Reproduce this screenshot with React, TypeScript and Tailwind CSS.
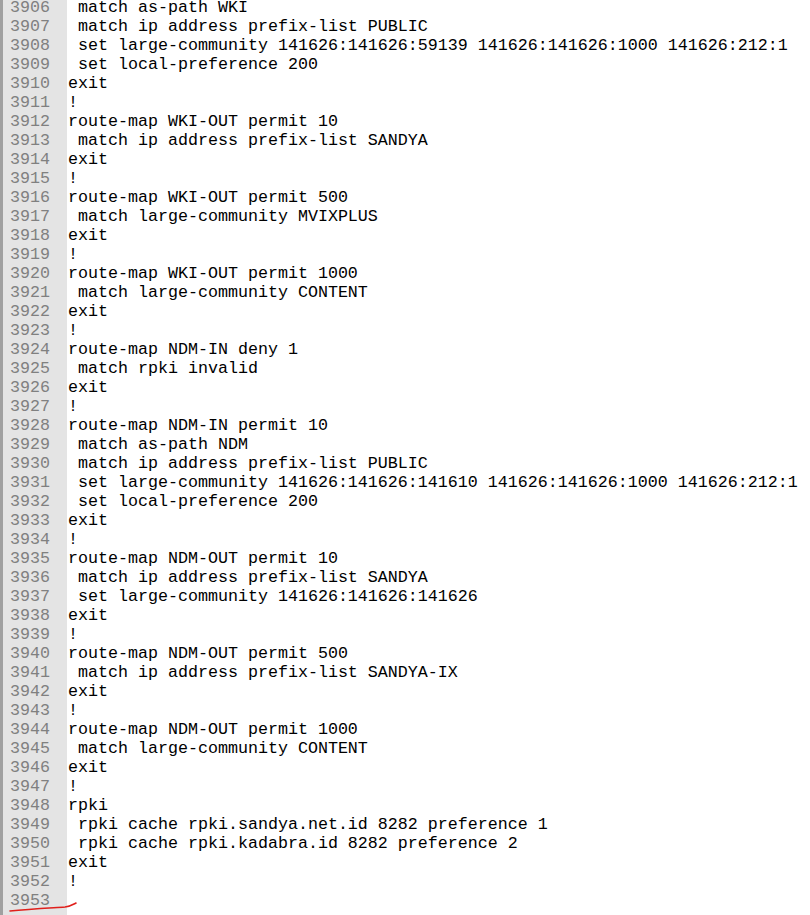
const lines = [
  ' match as-path WKI',
  ' match ip address prefix-list PUBLIC',
  ' set large-community 141626:141626:59139 141626:141626:1000 141626:212:1',
  ' set local-preference 200',
  'exit',
  '!',
  'route-map WKI-OUT permit 10',
  ' match ip address prefix-list SANDYA',
  'exit',
  '!',
  'route-map WKI-OUT permit 500',
  ' match large-community MVIXPLUS',
  'exit',
  '!',
  'route-map WKI-OUT permit 1000',
  ' match large-community CONTENT',
  'exit',
  '!',
  'route-map NDM-IN deny 1',
  ' match rpki invalid',
  'exit',
  '!',
  'route-map NDM-IN permit 10',
  ' match as-path NDM',
  ' match ip address prefix-list PUBLIC',
  ' set large-community 141626:141626:141610 141626:141626:1000 141626:212:1',
  ' set local-preference 200',
  'exit',
  '!',
  'route-map NDM-OUT permit 10',
  ' match ip address prefix-list SANDYA',
  ' set large-community 141626:141626:141626',
  'exit',
  '!',
  'route-map NDM-OUT permit 500',
  ' match ip address prefix-list SANDYA-IX',
  'exit',
  '!',
  'route-map NDM-OUT permit 1000',
  ' match large-community CONTENT',
  'exit',
  '!',
  'rpki',
  ' rpki cache rpki.sandya.net.id 8282 preference 1',
  ' rpki cache rpki.kadabra.id 8282 preference 2',
  'exit',
  '!',
  '',
]

export default function App() {
  return (
    <div className="relative w-[810px] h-[915px] overflow-hidden bg-white font-['Liberation_Mono','Courier_New',monospace] text-[16.67px]">
      <div className="flex h-full">
        <div className="w-[3px] bg-[#a0a0a0]" />
        <div className="w-[64px] bg-[#e4e4e4]" />
        <div className="flex-1" />
      </div>
      <div className="absolute inset-0 flex flex-col -mt-[2px]">
        {lines.map((line, i) => (
          <div key={i} className="flex h-[19px] leading-[19px]">
            <span className="w-[50px] pr-0 text-right text-[#808080]">{3906 + i}</span>
            <span className="ml-[18px] whitespace-pre text-black">{line}</span>
          </div>
        ))}
      </div>
      <svg className="absolute left-0 top-[895px]" width="90" height="20" viewBox="0 0 90 20">
        <path d="M10 16 C 30 14, 50 13, 65 12 C 70 11.5, 72 10, 76 8" stroke="#e0201c" strokeWidth="1.6" fill="none" strokeLinecap="round" />
      </svg>
    </div>
  )
}
